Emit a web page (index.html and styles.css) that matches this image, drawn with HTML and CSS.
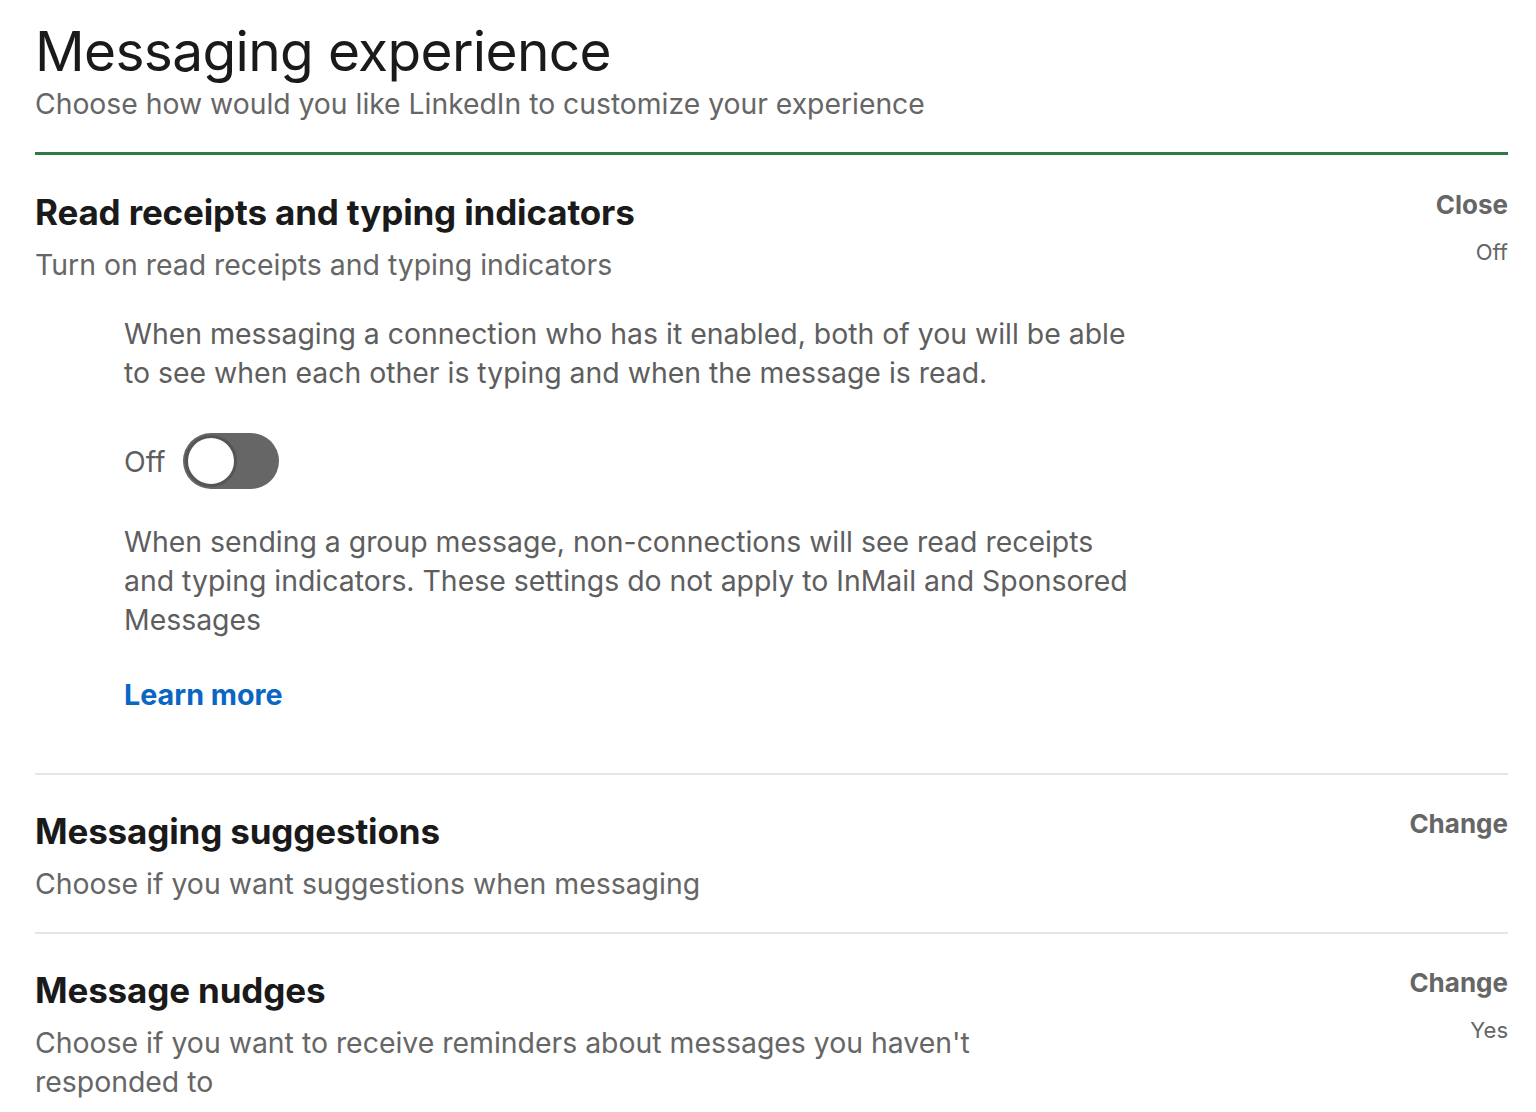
FILE: index.html
```html
<!DOCTYPE html>
<html lang="en">
<head>
<meta charset="utf-8">
<title>Messaging experience</title>
<link rel="stylesheet" href="styles.css">
</head>
<body>
<main class="page">
  <header class="header">
    <h1 class="title">Messaging experience</h1>
    <p class="subtitle">Choose how would you like LinkedIn to customize your experience</p>
  </header>

  <section class="setting setting-open">
    <div class="setting-head">
      <div class="setting-text">
        <h2 class="setting-title">Read receipts and typing indicators</h2>
        <p class="setting-desc">Turn on read receipts and typing indicators</p>
      </div>
      <div class="setting-actions">
        <span class="action">Close</span>
        <span class="state">Off</span>
      </div>
    </div>
    <div class="setting-body">
      <p class="para">When messaging a connection who has it enabled, both of you will be able to see when each other is typing and when the message is read.</p>
      <div class="toggle-row">
        <span class="toggle-label">Off</span>
        <span class="toggle"><span class="toggle-thumb"></span></span>
      </div>
      <p class="para">When sending a group message, non-connections will see read receipts and typing indicators. These settings do not apply to InMail and Sponsored Messages</p>
      <a class="learn" href="#">Learn more</a>
    </div>
  </section>

  <section class="setting">
    <div class="setting-head">
      <div class="setting-text">
        <h2 class="setting-title">Messaging suggestions</h2>
        <p class="setting-desc">Choose if you want suggestions when messaging</p>
      </div>
      <div class="setting-actions">
        <span class="action">Change</span>
      </div>
    </div>
  </section>

  <section class="setting setting-last">
    <div class="setting-head">
      <div class="setting-text narrow">
        <h2 class="setting-title">Message nudges</h2>
        <p class="setting-desc">Choose if you want to receive reminders about messages you haven't responded to</p>
      </div>
      <div class="setting-actions">
        <span class="action">Change</span>
        <span class="state">Yes</span>
      </div>
    </div>
  </section>
</main>
</body>
</html>
```

FILE: styles.css
```css
* { box-sizing: border-box; }
html, body { margin: 0; padding: 0; background: #ffffff; }
body {
  font-family: Inter, "Liberation Sans", Arial, sans-serif;
  color: #191919;
}
.page {
  padding: 18px 28px 0 35px;
}
.header {
  border-bottom: 3px solid #2d7a46;
  padding-bottom: 30px;
}
.title {
  margin: 0;
  font-size: 55px;
  line-height: 66px;
  font-weight: 400;
  color: #1a1a1a;
  letter-spacing: -0.65px;
}
.subtitle {
  margin: 2px 0 0;
  font-size: 28.3px;
  line-height: 36px;
  color: #666666;
}
.setting {
  border-bottom: 2px solid #e6e6e6;
  padding: 34px 0 29px;
}
.setting-open { padding-top: 35px; padding-bottom: 59px; }
.setting-last { border-bottom: none; padding-top: 34px; }
.setting-head {
  display: flex;
  justify-content: space-between;
  align-items: flex-start;
}
.setting-text.narrow { max-width: 960px; }
.setting-title {
  margin: 0;
  font-size: 35px;
  line-height: 44px;
  font-weight: 700;
  color: #1a1a1a;
  letter-spacing: -0.15px;
}
.setting-desc {
  margin: 11px 0 0;
  font-size: 28.4px;
  line-height: 39px;
  color: #666666;
}
.setting-actions {
  display: flex;
  flex-direction: column;
  align-items: flex-end;
  gap: 19px;
}
.action {
  font-size: 26px;
  line-height: 30px;
  font-weight: 700;
  color: #666666;
}
.state {
  font-size: 22px;
  line-height: 26px;
  color: #666666;
}
.setting-body {
  padding-left: 89px;
  padding-top: 30px;
}
.para {
  margin: 0;
  max-width: 1018px;
  font-size: 28.4px;
  line-height: 39px;
  color: #5e5e5e;
}
.toggle-row {
  display: flex;
  align-items: center;
  gap: 17px;
  margin: 41px 0 33px;
}
.toggle-label {
  font-size: 28.4px;
  line-height: 39px;
  color: #5e5e5e;
}
.toggle {
  display: flex;
  align-items: center;
  width: 96px;
  height: 56px;
  border-radius: 28px;
  background: #666666;
  padding: 2px;
}
.toggle-thumb {
  width: 52px;
  height: 52px;
  border-radius: 50%;
  background: #ffffff;
  border: 3px solid #555555;
}
.learn {
  display: inline-block;
  margin-top: 36px;
  font-size: 28.7px;
  line-height: 39px;
  font-weight: 700;
  color: #0a66c2;
  text-decoration: none;
}
```
